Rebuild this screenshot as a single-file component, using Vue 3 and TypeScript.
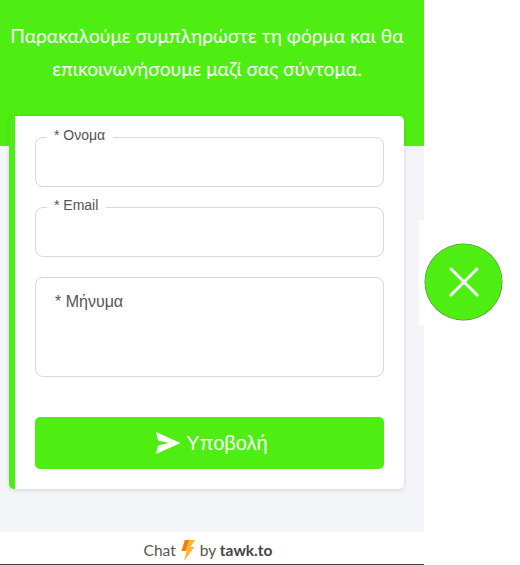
<script setup lang="ts">
interface Field { label: string; tall?: boolean }
const fields: Field[] = [
  { label: '* Ονομα' },
  { label: '* Email' },
]
</script>

<template>
  <div class="page">
    <div class="widget">
      <header class="head">
        <p>Παρακαλούμε συμπληρώστε τη φόρμα και θα επικοινωνήσουμε μαζί σας σύντομα.</p>
      </header>
      <main class="body">
        <form class="card" @submit.prevent>
          <div v-for="f in fields" :key="f.label" class="field">
            <span class="legend">{{ f.label }}</span>
          </div>
          <div class="area"><span>* Μήνυμα</span></div>
          <button class="submit" type="submit">
            <svg width="26" height="24" viewBox="0 0 26 24"><path d="M1 1 L25.5 12 L1 23 L3 14.5 L14 12 L3 9.5 Z" fill="#fff" /></svg>
            <span>Υποβολή</span>
          </button>
        </form>
      </main>
      <footer class="foot">
        <span>Chat</span>
        <svg width="16" height="21" viewBox="0 0 16 21">
          <path d="M5 0 H15 L10.5 7 H14.5 L4 21 L6.5 11 H1.5 Z" fill="#fbb731" />
          <path d="M5 0 H9 L5.5 11 H1.5 Z" fill="#ef7d17" />
        </svg>
        <span>by <b>tawk.to</b></span>
      </footer>
    </div>
    <div class="close-panel">
      <button class="close" type="button" aria-label="Close">
        <svg width="30" height="30" viewBox="0 0 30 30"><path d="M2 2 L28 28 M28 2 L2 28" stroke="#fff" stroke-width="3" stroke-linecap="round" /></svg>
      </button>
    </div>
  </div>
</template>

<style>
html, body { margin: 0; background: #fff; }
</style>

<style scoped>
.page {
  position: relative;
  width: 520px;
  height: 565px;
  overflow: hidden;
  font-family: Lato, "Open Sans", sans-serif;
}
.widget {
  width: 424px;
  height: 565px;
  display: flex;
  flex-direction: column;
  background: #f4f5f8;
}
.head {
  height: 146px;
  flex: none;
  box-sizing: border-box;
  background: #4fee12;
  padding: 19px 10px 0 0;
}
.head p {
  margin: 0;
  color: #fff;
  font-size: 19.2px;
  line-height: 33px;
  text-align: center;
}
.body {
  flex: 1;
  padding: 0 20px 0 9px;
}
.card {
  margin-top: -30px;
  height: 373px;
  box-sizing: border-box;
  background: #fff;
  border-left: 6px solid #4fee12;
  border-radius: 5px;
  box-shadow: 0 1px 4px rgba(0, 0, 0, 0.14);
  padding: 21px 20px 0;
  display: flex;
  flex-direction: column;
}
.field {
  position: relative;
  height: 50px;
  box-sizing: border-box;
  border: 1px solid #d9d9d9;
  border-radius: 8px;
  margin-bottom: 20px;
}
.legend {
  position: absolute;
  left: 11px;
  top: -12px;
  padding: 0 8px 2px 7px;
  background: #fff;
  color: #555;
  font-family: "Liberation Sans", sans-serif;
  font-size: 14px;
  line-height: 19px;
}
.area {
  height: 100px;
  box-sizing: border-box;
  border: 1px solid #d9d9d9;
  border-radius: 8px;
  padding: 14px 19px;
  color: #555;
  font-family: "Liberation Sans", sans-serif;
  font-size: 16px;
  line-height: 20px;
}
.submit {
  margin-top: 40px;
  height: 52px;
  flex: none;
  border: 0;
  border-radius: 5px;
  background: #4fee12;
  color: #fff;
  font-family: "Liberation Sans", sans-serif;
  font-size: 20px;
  display: flex;
  align-items: center;
  justify-content: center;
  gap: 5px;
  padding: 0 0 0 4px;
}
.foot {
  height: 33px;
  flex: none;
  box-sizing: border-box;
  background: #fff;
  border-bottom: 1px solid #4a3a30;
  display: flex;
  align-items: center;
  justify-content: center;
  gap: 4px;
  color: #555;
  font-size: 15.5px;
  padding: 4px 8px 0 0;
}
.foot b { font-weight: 700; color: #444; }
.close-panel {
  position: absolute;
  left: 419px;
  top: 220px;
  width: 101px;
  height: 105px;
  background: #fff;
}
.close {
  position: absolute;
  left: 6px;
  top: 24px;
  width: 77px;
  height: 76px;
  padding: 0;
  border: 0;
  border-radius: 50%;
  background: #4fee12;
  box-shadow: 0 0 0 0.5px #5a7a4a;
  display: flex;
  align-items: center;
  justify-content: center;
}
</style>
